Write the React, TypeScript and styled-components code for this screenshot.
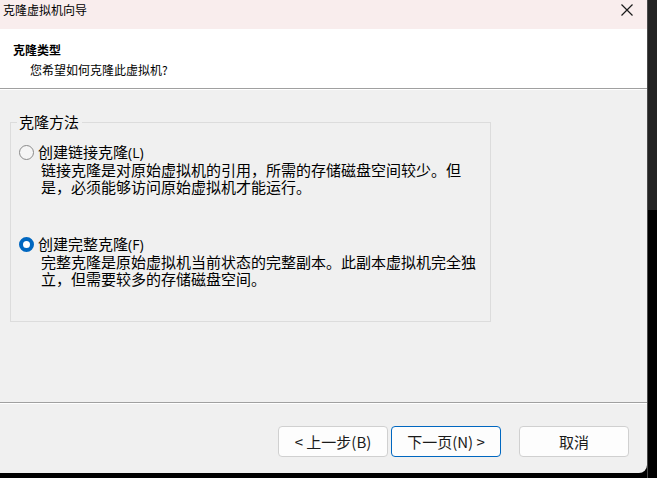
import React from "react"
import styled, { createGlobalStyle } from "styled-components"

/*==================== Global ====================*/

const GlobalStyle = createGlobalStyle`
    html, body {
        margin: 0;
        padding: 0;
        background: #000;
    }

    body {
        font-family: "Noto Sans CJK SC", "Noto Sans", "Liberation Sans", sans-serif;
        color: #000;
    }
`

/*==================== Data ====================*/

const options = [
    {
        label: "创建链接克隆",
        key: "L",
        description: "链接克隆是对原始虚拟机的引用，所需的存储磁盘空间较少。但是，必须能够访问原始虚拟机才能运行。",
        checked: false,
    },
    {
        label: "创建完整克隆",
        key: "F",
        description: "完整克隆是原始虚拟机当前状态的完整副本。此副本虚拟机完全独立，但需要较多的存储磁盘空间。",
        checked: true,
    },
]

/*==================== Component ====================*/

const App = () => (
    <Page>
        <GlobalStyle />

        <Window>
            <TitleBar>
                <Title>克隆虚拟机向导</Title>
                <CloseButton aria-label="关闭">
                    <svg width="12" height="12" viewBox="0 0 12 12">
                        <path d="M0.5 0.5 L11.5 11.5 M11.5 0.5 L0.5 11.5" stroke="#1a1a1a" strokeWidth="1.2" />
                    </svg>
                </CloseButton>
            </TitleBar>

            <Header>
                <HeaderTitle>克隆类型</HeaderTitle>
                <HeaderSub>您希望如何克隆此虚拟机?</HeaderSub>
            </Header>

            <Separator />

            <Body>
                <Group>
                    <Legend>克隆方法</Legend>

                    <Options>
                        {options.map(option => (
                            <Option key={option.key}>
                                <OptionLabel>
                                    <Radio $checked={option.checked} />
                                    <span>
                                        {option.label}
                                        <Latin>({option.key})</Latin>
                                    </span>
                                </OptionLabel>
                                <Description>{option.description}</Description>
                            </Option>
                        ))}
                    </Options>
                </Group>
            </Body>

            <Separator />

            <Footer>
                <Button>&lt; 上一步(B)</Button>
                <Button $primary>下一页(N) &gt;</Button>
                <Button $spaced>取消</Button>
            </Footer>
        </Window>

        <Backdrop />
    </Page>
)

export default App

/*==================== Styles ====================*/

const Page = styled.div`
    display: flex;
    width: 657px;
    height: 478px;
    background: #000;
    overflow: hidden;
`

const Window = styled.div`
    display: flex;
    flex-direction: column;
    width: 647px;
    height: 473px;
    flex-shrink: 0;
    background: #f0f0f0;
    border-radius: 0 0 8px 0;
    overflow: hidden;
`

const Backdrop = styled.div`
    flex: 1;
    height: 100%;
    border-left: 1px solid #4a4a4a;
    background: linear-gradient(to bottom, #232323 0, #232323 210px, #000 210px);
`

const TitleBar = styled.div`
    display: flex;
    justify-content: space-between;
    align-items: flex-start;
    height: 29px;
    padding: 2px 14px 0 3px;
    box-sizing: border-box;
    background: #f9eded;
`

const Title = styled.span`
    font-size: 12px;
    line-height: 16px;
`

const CloseButton = styled.div`
    display: flex;
    padding-top: 2px;
`

const Header = styled.div`
    display: flex;
    flex-direction: column;
    gap: 4px;
    height: 59px;
    padding: 13px 0 0 13px;
    box-sizing: border-box;
    background: #fff;
`

const HeaderTitle = styled.div`
    font-size: 12px;
    line-height: 16px;
    font-weight: 700;
`

const HeaderSub = styled.div`
    font-size: 12px;
    line-height: 16px;
    padding-left: 17px;
`

const Separator = styled.div`
    height: 1px;
    border-top: 1px solid #a0a0a0;
    background: #fff;
`

const Body = styled.div`
    flex: 1;
    padding: 22px 156px 0 10px;
`

const Group = styled.fieldset`
    margin: 0;
    padding: 0;
    height: 210px;
    box-sizing: border-box;
    border: 1px solid #dcdcdc;
    font-size: 15px;
`

const Legend = styled.legend`
    margin-left: 6px;
    padding: 0 3px 0 2px;
    font-size: 15px;
    line-height: 20px;
`

const Options = styled.div`
    display: flex;
    flex-direction: column;
    gap: 40px;
    padding: 11px 0 0 8px;
`

const Option = styled.div`
    display: flex;
    flex-direction: column;
`

const OptionLabel = styled.label`
    display: flex;
    align-items: center;
    gap: 4px;
    font-size: 15px;
    line-height: 17px;
`

const Latin = styled.span`
    font-family: "Open Sans", "Liberation Sans", sans-serif;
    font-size: 14px;
`

const Radio = styled.span<{ $checked?: boolean }>`
    display: inline-block;
    width: 15px;
    height: 15px;
    box-sizing: border-box;
    border-radius: 50%;
    border: ${({ $checked }) => ($checked ? "4.5px solid #0067c0" : "1px solid #8a8a8a")};
    background: ${({ $checked }) => ($checked ? "#fff" : "#f5f5f5")};
`

const Description = styled.p`
    margin: 0;
    padding-left: 22px;
    width: 440px;
    font-size: 15px;
    line-height: 17px;
`

const Footer = styled.div`
    display: flex;
    justify-content: flex-end;
    gap: 3px;
    padding: 22px 18px 0 0;
    flex: 0 0 69px;
    box-sizing: border-box;
`

const Button = styled.button<{ $primary?: boolean; $spaced?: boolean }>`
    width: 110px;
    height: 31px;
    margin-left: ${({ $spaced }) => ($spaced ? "15px" : "0")};
    border-radius: 4px;
    border: 1px solid ${({ $primary }) => ($primary ? "#0067c0" : "#d0d0d0")};
    background: #fdfdfd;
    font-family: "Noto Sans CJK SC", "Noto Sans", sans-serif;
    font-size: 15px;
    line-height: 20px;
    color: #1a1a1a;
    padding: 0;
`
